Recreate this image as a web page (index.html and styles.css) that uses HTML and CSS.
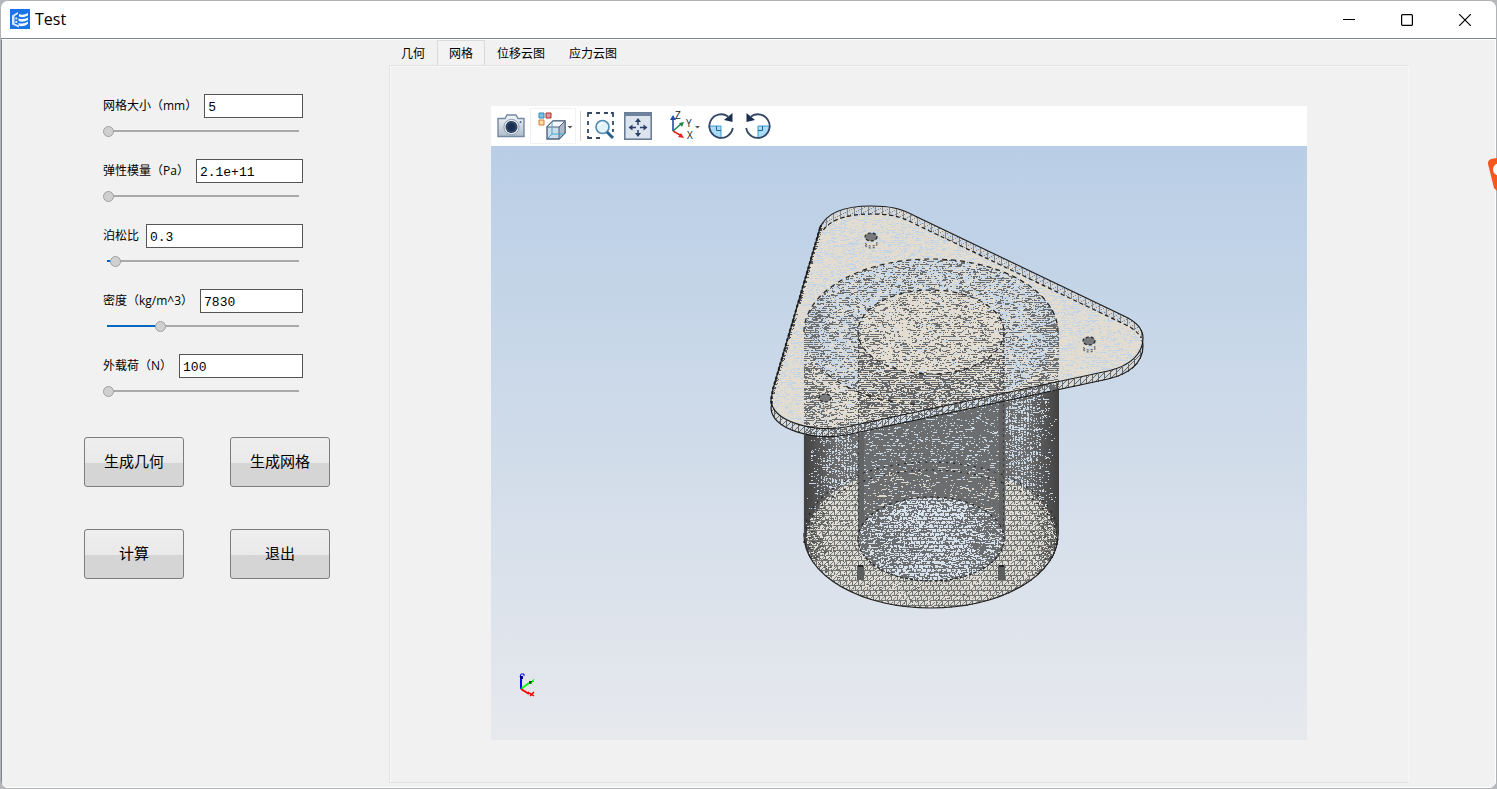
FILE: index.html
```html
<!DOCTYPE html>
<html lang="zh-CN">
<head>
<meta charset="utf-8">
<title>Test</title>
<link rel="stylesheet" href="styles.css">
</head>
<body>
<div class="window">
  <header class="titlebar">
    <svg class="app-icon" viewBox="0 0 20 20" aria-hidden="true">
      <rect width="20" height="20" fill="#1a73e8"/>
      <path d="M2 6.500 8 3v2L4.500 7.200V14.500L9 16.500v2L2 15.500Z" fill="#d9e9ff"/>
      <path d="M9 5q4 2 9-1v2.500q-5 3-9 1ZM8.500 9.500q5 1.500 9.500-1v2.500q-5 3-9.500 1ZM8.500 14q5 1.500 9.500-1.500v2.500q-5 3.500-9.500 1.500Z" fill="#f3f8ff"/>
      <path d="M5.300 8.500h2v2h-2zM5.300 12h2v2h-2z" fill="#d9e9ff"/>
    </svg>
    <h1 class="title">Test</h1>
    <div class="window-buttons">
      <button type="button" aria-label="最小化"><svg viewBox="0 0 12 12"><path d="M0 5.500h12"/></svg></button>
      <button type="button" aria-label="最大化"><svg viewBox="0 0 12 12"><rect x=".6" y=".6" width="10.800" height="10.800" rx="1"/></svg></button>
      <button type="button" aria-label="关闭"><svg viewBox="0 0 12 12"><path d="M0 0l12 12M12 0 0 12"/></svg></button>
    </div>
  </header>

  <div class="content">
    <aside class="sidebar">
      <form class="params">
        <div class="param">
          <div class="param-row"><label for="size">网格大小（mm）</label><input id="size" type="text" value="5"></div>
          <input class="slider" type="range" aria-label="网格大小" min="0" max="1000" value="0" style="--fill:0%">
        </div>
        <div class="param">
          <div class="param-row"><label for="modulus">弹性模量（Pa）</label><input id="modulus" type="text" value="2.1e+11"></div>
          <input class="slider" type="range" aria-label="弹性模量" min="0" max="1000" value="0" style="--fill:0%">
        </div>
        <div class="param">
          <div class="param-row"><label for="poisson">泊松比</label><input id="poisson" type="text" value="0.3"></div>
          <input class="slider" type="range" aria-label="泊松比" min="0" max="1000" value="37" style="--fill:3.7%">
        </div>
        <div class="param">
          <div class="param-row"><label for="density">密度（kg/m^3）</label><input id="density" type="text" value="7830"></div>
          <input class="slider" type="range" aria-label="密度" min="0" max="1000" value="275" style="--fill:27.5%">
        </div>
        <div class="param">
          <div class="param-row"><label for="load">外载荷（N）</label><input id="load" type="text" value="100"></div>
          <input class="slider" type="range" aria-label="外载荷" min="0" max="1000" value="0" style="--fill:0%">
        </div>
      </form>
      <div class="actions">
        <button type="button">生成几何</button>
        <button type="button">生成网格</button>
        <button type="button">计算</button>
        <button type="button">退出</button>
      </div>
    </aside>

    <main class="main">
      <div class="tabs" role="tablist">
        <button type="button" role="tab" aria-selected="false">几何</button>
        <button type="button" role="tab" aria-selected="true">网格</button>
        <button type="button" role="tab" aria-selected="false">位移云图</button>
        <button type="button" role="tab" aria-selected="false">应力云图</button>
      </div>
      <section class="panel" role="tabpanel">
        <div class="toolbar">
          <button type="button" class="tool" aria-label="截图">
            <svg width="28" height="24" viewBox="0 0 28 24">
              <defs><linearGradient id="cam" x1="0" y1="0" x2="0" y2="1"><stop offset="0" stop-color="#f4f6f9"/><stop offset="1" stop-color="#aebccb"/></linearGradient></defs>
              <path d="M1 4.500h7l2-3.500h9l2 3.500h6V22.500H1z" fill="url(#cam)" stroke="#7388a3" stroke-width="1.400"/>
              <circle cx="14.500" cy="13" r="7.600" fill="#f4f6f9" stroke="#8496ad"/>
              <circle cx="14.500" cy="13" r="6" fill="#1b2f52"/>
              <circle cx="14.500" cy="13" r="4.600" fill="none" stroke="#4d6285" stroke-width=".8"/>
              <circle cx="23.500" cy="8" r="1" fill="#4d6285"/>
            </svg>
          </button>
          <button type="button" class="tool framed" aria-label="视图">
            <svg width="37" height="32" viewBox="0 0 37 32">
              <path d="M3 3h5v5H3z" fill="#7cc0e6" stroke="#3588ba"/>
              <path d="M10 3h5v5h-5z" fill="#e09a9d" stroke="#b3282d"/>
              <path d="M3 10h5v5H3z" fill="#fbe1a9" stroke="#e0762a"/>
              <path d="M11 17l6-6h12v12l-6 6H11z" fill="#cbdcea" stroke="#50627c" stroke-width="1.400"/>
              <path d="M11 17l6-6h12l-6 6z" fill="#f4f8fb" stroke="#50627c"/>
              <path d="M23 17l6-6v12l-6 6z" fill="#a9b9ca" stroke="#50627c"/>
              <path d="M16 12v12h12M16 24l-4 4" fill="none" stroke="#45a7cf"/>
              <path d="M31.500 16h5L34 18.500z" fill="#555"/>
            </svg>
          </button>
          <span class="separator"></span>
          <button type="button" class="tool" aria-label="框选缩放">
            <svg width="28" height="28" viewBox="0 0 28 28">
              <path d="M1 5V1h4M9 1h4M17 1h4M24 1h2v4M26 9v4M1 9v4M1 17v4M1 24v2h4M9 26h4M26 17v3" fill="none" stroke="#344768" stroke-width="1.800"/>
              <circle cx="15.500" cy="15" r="6.500" fill="#e1f3fb" stroke="#518bb2" stroke-width="1.600"/>
              <path d="M12 14q1-3 4-3" fill="none" stroke="#fff" stroke-width="1.500"/>
              <path d="M20 20l6 6" stroke="#28618f" stroke-width="3"/>
            </svg>
          </button>
          <button type="button" class="tool" aria-label="适合窗口">
            <svg width="28" height="28" viewBox="0 0 28 28">
              <rect x=".8" y=".8" width="26.400" height="26.400" fill="#dce4ed" stroke="#6b7e98" stroke-width="1.600"/>
              <path d="M1 1h26v3H1z" fill="#6f83a0"/>
              <path d="M14 8v5M14 18v5M7 15.500h5M16 15.500h5" stroke="#2a4066" stroke-width="1.500"/>
              <path d="M14 6l3 4h-6zM14 25l3-4h-6zM4.500 15.500l4-3v6zM23.500 15.500l-4-3v6z" fill="#2a4066"/>
            </svg>
          </button>
          <button type="button" class="tool axes" aria-label="坐标轴">
            <svg width="32" height="30" viewBox="0 0 32 30">
              <path d="M4 20V8" stroke="#2449a8" stroke-width="1.600"/><path d="M4 4l3 5H1z" fill="#2449a8"/>
              <path d="M4 20l8-7" stroke="#16894a" stroke-width="1.600"/><path d="M15 11l-5 1 3 4z" fill="#16894a"/>
              <path d="M4 20l7 4" stroke="#e52521" stroke-width="1.600"/><path d="M15 27l-6-1 3-4z" fill="#e52521"/>
              <text x="6" y="8">Z</text><text x="17" y="16">Y</text><text x="18" y="28">X</text>
              <path d="M26 15h5l-2.500 2.500z" fill="#555"/>
            </svg>
          </button>
          <button type="button" class="tool rotate" aria-label="顺时针旋转">
            <svg width="28" height="28" viewBox="0 0 28 28">
              <path d="M2 14h12v12A12 12 0 0 1 2 14z" fill="#a8dbf5" stroke="#3d9acb"/>
              <path d="M9.500 14v4.500H14" fill="none" stroke="#25658e"/>
              <path d="M21 4.500A11.800 11.800 0 1 0 25.800 16" fill="none" stroke="#344768" stroke-width="1.800"/>
              <path d="M25.500 1v9l-8.500-2z" fill="#1b2f52"/>
            </svg>
          </button>
          <button type="button" class="tool" aria-label="逆时针旋转">
            <svg width="28" height="28" viewBox="0 0 28 28">
              <path d="M26 14H14v12A12 12 0 0 0 26 14z" fill="#a8dbf5" stroke="#3d9acb"/>
              <path d="M18.500 14v4.500H14" fill="none" stroke="#25658e"/>
              <path d="M7 4.500A11.800 11.800 0 1 1 2.200 16" fill="none" stroke="#344768" stroke-width="1.800"/>
              <path d="M2.500 1v9l8.500-2z" fill="#1b2f52"/>
            </svg>
          </button>
        </div>
        <div class="scene">
          <canvas id="mesh" class="mesh" width="816" height="594"></canvas>
          <svg class="triad" viewBox="0 0 20 26" aria-hidden="true">
            <path d="M3 17V5" stroke="#00f" stroke-width="2"/><path d="M2 5l1-3h3v2" fill="none" stroke="#00f"/><path d="M2 4h3v3H2z" fill="#008"/>
            <path d="M3 17l8-6" stroke="#0f0" stroke-width="1.800"/><path d="M11 9h3v3h-3z" fill="#151"/><path d="M14 8l2 2M16 7l-3 5" stroke="#0f0"/>
            <path d="M3 17l8 5" stroke="#f00" stroke-width="1.800"/><path d="M10 20l6 4M16 20l-4 4" stroke="#e00" stroke-width="1.500"/>
          </svg>
        </div>
      </section>
    </main>
  </div>
</div>
<svg class="badge" viewBox="0 0 9 33" aria-hidden="true">
  <path d="M0 6Q-.5 2 3 1L9 0V33L6 30z" fill="#f7571f"/>
  <circle cx="11" cy="11.500" r="6" fill="#fff"/>
</svg>
<script src="mesh.js"></script>
</body>
</html>
```
FILE: styles.css
```css
* { box-sizing: border-box; }

body {
  margin: 0;
  height: 100vh;
  overflow: hidden;
  background: #b4b7bb;
  font-family: "Open Sans", "Noto Sans CJK SC", sans-serif;
  font-size: 12px;
  color: #000;
}

button { font-family: inherit; color: inherit; padding: 0; }

.window {
  height: 100vh;
  display: flex;
  flex-direction: column;
  overflow: hidden;
  border: 1px solid #b0b2b5;
  border-radius: 8px;
  background: #f1f1f1;
}

.titlebar {
  flex: none;
  height: 38px;
  display: flex;
  align-items: center;
  padding: 0 2px 2px 9px;
  background: #fff;
  border-bottom: 1px solid #7f858f;
}
.app-icon { width: 20px; height: 20px; }
.title { margin: 0 0 0 5px; font-size: 16px; font-weight: 400; }
.window-buttons { display: flex; margin-left: auto; }
.window-buttons button {
  width: 58px;
  height: 35px;
  border: 0;
  background: none;
}
.window-buttons svg {
  width: 12px;
  height: 12px;
  fill: none;
  stroke: #000;
  stroke-width: 1.2;
  vertical-align: middle;
}

.content {
  flex: 1;
  min-height: 0;
  display: flex;
  border: 1px solid #fff;
  border-left-color: #7f858f;
}

.sidebar { flex: none; width: 387px; padding: 54px 59px 0 82px; }

.params { width: 200px; margin-left: 19px; display: flex; flex-direction: column; gap: 22px; }
.param-row { display: flex; align-items: center; gap: 7px; height: 24px; margin-bottom: 7px; }
.param-row label { flex: none; line-height: 24px; }
.param-row input {
  flex: 1;
  min-width: 0;
  height: 24px;
  padding: 2px 3px 0;
  border: 1px solid #555;
  background: #fff;
  font: 13px "Liberation Mono", monospace;
  color: #000;
}

.slider {
  appearance: none;
  display: block;
  width: 100%;
  height: 12px;
  margin: 0;
  background:
    linear-gradient(#0067c0, #0067c0) 4px center / calc(var(--fill) * 0.96) 2px no-repeat,
    linear-gradient(#a9a9a9, #a9a9a9) 4px center / calc(100% - 8px) 2px no-repeat;
}
.slider::-webkit-slider-thumb {
  appearance: none;
  width: 11px;
  height: 11px;
  border: 1px solid #a0a0a0;
  border-radius: 50%;
  background: #d0d0d0;
}

.actions {
  display: grid;
  grid-template-columns: 100px 100px;
  justify-content: space-between;
  gap: 42px 0;
  margin-top: 40px;
}
.actions button {
  height: 50px;
  padding-bottom: 4px;
  border: 1px solid #7d7d7d;
  border-radius: 3px;
  background: linear-gradient(#eee, #e9e9e9 52%, #d5d5d5 52%, #d5d5d5);
  font-size: 15px;
}

.main { flex: 1; min-width: 0; display: flex; flex-direction: column; margin: 0 86px 4px 0; }

.tabs { display: flex; height: 25px; }
.tabs button {
  height: 25px;
  padding: 0 11px;
  border: 1px solid transparent;
  background: none;
  font-size: 12px;
}
.tabs [aria-selected="true"] { border-color: #dadada; border-bottom: 0; background: #f3f3f3; }

.panel {
  flex: 1;
  min-height: 0;
  display: flex;
  flex-direction: column;
  padding: 40px 101px 42px;
  border: 1px solid #e1e1e1;
  border-right-color: #f6f6f6;
  box-shadow: inset 1px 1px #fafafa;
}

.toolbar { flex: none; height: 40px; display: flex; align-items: center; gap: 9px; padding-left: 6px; background: #fff; }
.tool { flex: none; display: flex; align-items: center; justify-content: center; border: 0; background: none; }
.framed { width: 46px; height: 36px; margin: 0 -5px 0 -4px; padding-left: 2px; border: 1px solid #f0f2f8; }
.separator { width: 1px; height: 30px; margin-right: -3px; background: #d4d4d8; }
.axes { margin-left: 8px; }
.rotate { margin-left: -3px; }
.axes text { font: 10px "Open Sans", sans-serif; fill: #222; }

.scene { flex: 1; min-height: 0; position: relative; background: linear-gradient(#b9cee6, #e7e9ed); }
.mesh { display: block; width: 100%; height: 100%; object-fit: cover; object-position: top; }
.triad { position: absolute; left: 27px; bottom: 42px; width: 20px; height: 26px; }

.badge { position: absolute; right: 0; top: 158px; width: 9px; height: 33px; }
```
FILE: mesh.js
```js
// Draws the triangulated bracket: flange plate plus two concentric cylinders.
const canvas = document.getElementById("mesh");
const ctx = canvas.getContext("2d");
const OX = 491, OY = 146;

function plate(dy) {
  const p = new Path2D();
  p.moveTo(820, 228 + dy);
  p.bezierCurveTo(826, 213 + dy, 844, 206 + dy, 871, 206 + dy);
  p.bezierCurveTo(889, 206 + dy, 900, 208 + dy, 915, 216 + dy);
  p.lineTo(1124, 316 + dy);
  p.bezierCurveTo(1137, 322 + dy, 1143, 329 + dy, 1143, 338 + dy);
  p.bezierCurveTo(1143, 354 + dy, 1130, 366 + dy, 1108, 371 + dy);
  p.lineTo(846, 427 + dy);
  p.bezierCurveTo(812, 433 + dy, 772, 421 + dy, 771, 400 + dy);
  p.lineTo(773, 389 + dy);
  p.closePath();
  return p;
}

const THICK = 8;
const upper = plate(0), under = plate(THICK);
const inEllipse = (x, y, cy, rx, ry) => ((x - 931) / rx) ** 2 + ((y - cy) / ry) ** 2 <= 1;

let seed = 7, held = 0;
function rnd() {
  seed = (seed * 1664525 + 1013904223) >>> 0;
  return seed / 4294967296;
}
// Repeats the previous value now and then, giving short horizontal strokes.
function run() {
  if (rnd() > 0.4) held = rnd();
  return held;
}

function color(x, y) {
  const face = ctx.isPointInPath(upper, x, y);
  const below = ctx.isPointInPath(under, x, y);
  const dx = Math.abs(x - 931);
  const reach = Math.sqrt(Math.max(0, 1 - (dx / 127) ** 2));
  const outer = dx <= 127 && y > 332 - 73 * reach && y < 535 + 73 * reach;
  const inner = dx <= 73 && y > 332 && y < 539 + 42 * Math.sqrt(Math.max(0, 1 - (dx / 73) ** 2));
  const edge = Math.max(0, (dx - 96) / 31);
  const r = run();
  const gray = "#6c6d6f";

  if (!face && below) {
    if (x % 6 === 0 || (x + y) % 6 === 0) return "#666767";
    return outer && r < 0.35 ? gray : r < 0.5 ? "#ddd9d1" : null;
  }
  if (face && !below) {
    if (x < 822) return r < 0.45 ? "#555" : "#e3dcd0";
    if (x % 7 === 0 || (x + y * 2) % 9 === 0) return "#85878a";
    return r < 0.4 ? "#bfd2e7" : "#ddd9d1";
  }
  if (face) {
    const cap = inEllipse(x, y, 332, 127, 73);
    const core = inEllipse(x, y, 332, 73, 42);
    const dash = (y % 2 === 0) ? 1.45 : 0.55;
    if (core) return r < 0.26 * dash ? gray : r > 0.93 ? "#c5d6e8" : "#e3dcd0";
    if (inner) return r < 0.52 * dash ? "#646566" : r > 0.92 ? "#c8d8e8" : "#e3dcd0";
    if (cap) return r < (0.26 + 0.3 * edge) * dash ? gray : r > 0.58 ? "#c4d5e7" : "#e3dcd0";
    if (outer) return r < (0.27 + 0.25 * edge) * dash ? gray : r > 0.9 ? "#c5d6e8" : "#e3dcd0";
    return r < 0.25 * dash ? "#c3d4e7" : "#e3dcd0";
  }
  if (!outer) return null;

  const floor = inEllipse(x, y, 537, 125, 73);
  const wall = Math.round(108 - 42 * edge);
  const wallColor = `rgb(${wall},${wall},${wall})`;
  if (inner) {
    if (inEllipse(x, y, 539, 73, 42)) {
      const spread = dx / 73;
      if (y % 4 === 0 || (x + (y >> 2) * 2) % 5 === 0) return r < 0.18 ? "#d8e2ec" : gray;
      return r < 0.8 - 0.45 * spread ? "#d8e2ec" : gray;
    }
    if (dx > 67) return "#626364";
    const p = 0.13 * (y % 2 ? 1.5 : 0.5);
    return r < p ? (floor && r < 0.08 ? "#ded8cc" : "#cbd9e7") : gray;
  }
  if (floor) {
    const row = Math.floor(y / 5);
    const lean = (x + (row % 2) * 3 + (y % 5)) % 6 === 0;
    const grid = y % 5 === 0 || (x + (row % 2) * 3) % 6 === 0 || lean;
    if (grid) return r < 0.06 ? "#ded9cf" : "#747471";
    return r < 0.97 - edge * 0.6 ? ((x * 7 + y * 3) % 5 < 2 ? "#dce1e6" : "#e1dcd1") : wallColor;
  }
  if (y > 560) return r < 0.5 ? "#6c6d6c" : "#dfddd5";
  const p = 0.33 * (1 - Math.min(1, edge * 1.05));
  return r < p * (x % 3 === 0 ? 0.25 : 1.3) ? "#cbd9e7" : wallColor;
}

for (let y = 200; y < 615; y++) {
  for (let x = 765; x < 1150; x++) {
    const c = color(x, y);
    if (c) {
      ctx.fillStyle = c;
      ctx.fillRect(x - OX, y - OY, 1, 1);
    }
  }
}

ctx.translate(-OX, -OY);
function ellipse(cx, cy, rx, ry, from, to, dash, stroke) {
  ctx.beginPath();
  ctx.ellipse(cx, cy, rx, ry, 0, from, to);
  ctx.setLineDash(dash);
  ctx.strokeStyle = stroke || "#222";
  ctx.stroke();
}
function strokeWithin(path, x, y, w, h, dash) {
  ctx.save();
  ctx.beginPath();
  ctx.rect(x, y, w, h);
  ctx.clip();
  ctx.setLineDash(dash);
  ctx.stroke(path);
  ctx.restore();
}

ctx.lineWidth = 1.2;
ctx.strokeStyle = "#1c1c1c";
ctx.stroke(upper);
strokeWithin(under, 760, 402, 400, 50, []);
strokeWithin(under, 900, 340, 250, 62, []);
strokeWithin(under, 822, 200, 321, 138, [4, 3]);
ctx.lineWidth = 2;
strokeWithin(upper, 765, 225, 56, 180, [3, 2]);
ctx.lineWidth = 1.2;

ellipse(931, 332, 127, 73, Math.PI, Math.PI * 2, [5, 4]);
ellipse(931, 332, 127, 73, 1.7, 2.6, [5, 6]);
ellipse(931, 332, 73, 42, 0, Math.PI * 2, [5, 4]);
ellipse(931, 535, 127, 73, 0, Math.PI, [], "#262626");
ellipse(931, 535, 127, 73, Math.PI, Math.PI * 2, [2, 5]);
ellipse(931, 543, 127, 73, Math.PI, Math.PI * 2, [2, 5]);
ellipse(931, 539, 73, 42, 0, Math.PI, [3, 2]);
ellipse(931, 539, 73, 42, Math.PI, Math.PI * 2, [3, 4]);

ctx.strokeStyle = "#444";
ctx.setLineDash([]);
for (const x of [804.5, 1057.5]) {
  ctx.beginPath();
  ctx.moveTo(x, x < 900 ? 432 : 384);
  ctx.lineTo(x, 537);
  ctx.stroke();
}
ctx.setLineDash([3, 3]);
for (const x of [858.5, 1003.5]) {
  ctx.beginPath();
  ctx.moveTo(x, 332);
  ctx.lineTo(x, 539);
  ctx.stroke();
}

for (const [x, y] of [[871, 237], [1089, 341], [825, 398]]) {
  ctx.fillStyle = "#77797a";
  ctx.beginPath();
  ctx.ellipse(x, y, 6, 4, 0, 0, Math.PI * 2);
  ctx.fill();
  ellipse(x, y, 6, 4, 0, Math.PI * 2, [3, 2]);
  ellipse(x, y + 5, 6, 4, 0, Math.PI, [2, 2], "#666");
  ellipse(x, y + 7, 6, 4, 0, Math.PI, [2, 2], "#666");
}
for (const x of [857, 998]) {
  ctx.fillStyle = "#5c5d5d";
  ctx.fillRect(x, 566, 7, 14);
  ctx.fillStyle = "#252525";
  ctx.fillRect(x + 1, 565, 5, 2);
}
```
